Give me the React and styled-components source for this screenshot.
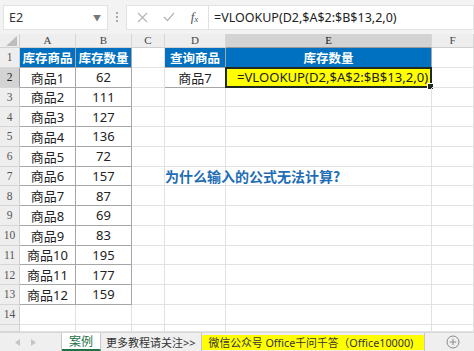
import React from 'react';
import styled, { createGlobalStyle } from 'styled-components';

const GlobalStyle = createGlobalStyle`
  html, body {
    margin: 0;
    padding: 0;
    background: #fff;
  }
  #root {
    width: 474px;
    height: 351px;
  }
`;

const SANS = `"Noto Sans", "Noto Sans CJK SC", sans-serif`;
const SERIF = `"Liberation Serif", "DejaVu Serif", serif`;

const Window = styled.div`
  width: 474px;
  height: 351px;
  display: flex;
  flex-direction: column;
  overflow: hidden;
  font-family: ${SANS};
`;

const FormulaBar = styled.div`
  height: 34px;
  flex: none;
  display: flex;
  align-items: center;
  padding: 0 0 0 3px;
  background: #f3f3f3;
  box-sizing: border-box;
`;

const NameBox = styled.div`
  width: 105px;
  height: 25px;
  background: #fff;
  border: 1px solid #e2e2e2;
  box-sizing: border-box;
  display: flex;
  align-items: center;
  justify-content: space-between;
  padding: 0 6px 0 5px;
  font-size: 12.5px;
  color: #333;
`;

const Caret = styled.span`
  font-size: 8px;
  color: #777;
`;

const Dots = styled.div`
  width: 18px;
  display: flex;
  flex-direction: column;
  align-items: center;
  gap: 2px;
  span {
    width: 2px;
    height: 2px;
    background: #a8a8a8;
  }
`;

const ButtonsBox = styled.div`
  width: 82px;
  height: 25px;
  background: #fff;
  border: 1px solid #e2e2e2;
  border-right: none;
  box-sizing: border-box;
  display: flex;
  align-items: center;
  justify-content: space-around;
  padding: 0 2px;
`;

const Fx = styled.span`
  font-family: ${SERIF};
  font-style: italic;
  font-size: 13px;
  color: #555;
  sub {
    font-size: 9px;
    vertical-align: -1px;
  }
`;

const FormulaInput = styled.div`
  flex: 1;
  height: 25px;
  background: #fff;
  border: 1px solid #e2e2e2;
  box-sizing: border-box;
  display: flex;
  align-items: center;
  padding-left: 5px;
  font-size: 12.5px;
  color: #222;
  white-space: nowrap;
`;

const Sheet = styled.div`
  flex: 1;
  display: grid;
  grid-template-columns: 20px 56px 56px 33px 61px 206px 1fr;
  grid-template-rows: 14px repeat(14, 19.75px) 1fr;
  overflow: hidden;
  background: #fff;
`;

const Corner = styled.div`
  background: #eeeeee;
  border-right: 1px solid #d0d0d0;
  border-bottom: 1px solid #d0d0d0;
  box-sizing: border-box;
  display: flex;
  align-items: flex-end;
  justify-content: flex-end;
  padding: 0 2px 1px 0;
`;

const ColHead = styled.div`
  background: ${p => (p.$active ? '#d3d3d3' : '#eeeeee')};
  border-right: 1px solid #d6d6d6;
  border-bottom: 1px solid ${p => (p.$active ? '#9a9a9a' : '#d0d0d0')};
  box-sizing: border-box;
  display: flex;
  align-items: center;
  justify-content: center;
  font-family: ${SERIF};
  font-size: 11px;
  color: ${p => (p.$active ? '#222' : '#444')};
  line-height: 1;
`;

const RowHead = styled.div`
  background: ${p => (p.$active ? '#d3d3d3' : '#eeeeee')};
  border-right: 1px solid ${p => (p.$active ? '#9a9a9a' : '#d0d0d0')};
  border-bottom: 1px solid #d6d6d6;
  box-sizing: border-box;
  display: flex;
  align-items: center;
  justify-content: center;
  font-family: ${SERIF};
  font-size: 11.5px;
  color: ${p => (p.$active ? '#222' : '#555')};
  overflow: hidden;
`;

const Cell = styled.div`
  position: relative;
  box-sizing: border-box;
  border-right: 1px solid ${p => (p.$edge ? '#a6a6a6' : '#e2e2e2')};
  border-bottom: 1px solid ${p => (p.$edge ? '#a6a6a6' : '#e2e2e2')};
  background: ${p => p.$fill || 'transparent'};
  color: ${p => (p.$fill === '#0070c0' ? '#fff' : '#222')};
  font-size: 13px;
  display: flex;
  align-items: center;
  justify-content: ${p => p.$align || 'center'};
  padding: ${p => (p.$align === 'flex-start' ? '0 0 0 11px' : '0')};
  white-space: nowrap;
  overflow: visible;
  min-width: 0;
`;

const HeaderText = styled.span`
  font-family: "Noto Sans CJK SC", sans-serif;
  font-size: 12.5px;
  font-weight: 700;
`;

const FormulaText = styled.span`
  font-size: 13.1px;
`;

const Selected = styled.div`
  position: absolute;
  inset: -1px;
  border: 2px solid #1e2a22;
  pointer-events: none;
  &::after {
    content: '';
    position: absolute;
    right: -4px;
    bottom: -4px;
    width: 5px;
    height: 5px;
    background: #1e2a22;
    border: 1px solid #fff;
  }
`;

const Question = styled.span`
  font-family: "Noto Sans CJK SC", sans-serif;
  font-size: 14px;
  font-weight: 700;
  color: #1f6db4;
  position: relative;
  left: -11px;
`;

const TabBar = styled.div`
  height: 19px;
  flex: none;
  display: flex;
  align-items: stretch;
  background: #efefef;
  border-top: 1px solid #d8d8d8;
  box-sizing: border-box;
  font-size: 11px;
  color: #333;
`;

const NavArrows = styled.div`
  width: 62px;
  display: flex;
  align-items: center;
  gap: 11px;
  padding-left: 15px;
  box-sizing: border-box;
  border-right: 1px solid #c6c6c6;
`;

const Tab = styled.div`
  display: flex;
  align-items: center;
  padding: 0 ${p => p.$pad}px;
  background: ${p => (p.$active ? '#fff' : 'transparent')};
  color: ${p => (p.$active ? '#217346' : '#333')};
  border-bottom: ${p => (p.$active ? '2px solid #217346' : 'none')};
  border-right: 1px solid #c6c6c6;
  box-sizing: border-box;
  white-space: nowrap;
  font-size: ${p => (p.$active ? '12px' : 'inherit')};
`;

const Highlight = styled.span`
  background: #ffff00;
  padding: 0 11px 0 7px;
  height: 15px;
  line-height: 15px;
  font-size: 10.8px;
`;

const AddSheet = styled.div`
  flex: 1;
  display: flex;
  align-items: center;
  padding-left: 21px;
`;

const products = [62, 111, 127, 136, 72, 157, 87, 69, 83, 195, 177, 159];
const cols = ['A', 'B', 'C', 'D', 'E', 'F'];

const Triangle = ({ dir }) => (
  <svg width="5" height="7" viewBox="0 0 5 7">
    <polygon points={dir === 'left' ? '5,0 0,3.5 5,7' : '0,0 5,3.5 0,7'} fill="#c4c4c4" />
  </svg>
);

function cellFor(r, c) {
  const inLeft = r >= 1 && r <= 13 && c <= 1;
  const inRight = r >= 1 && r <= 2 && (c === 3 || c === 4);
  const edge = inLeft || inRight;
  const key = `${r}-${c}`;

  if (r === 1 && c === 0) return <Cell key={key} $edge $fill="#0070c0"><HeaderText>库存商品</HeaderText></Cell>;
  if (r === 1 && c === 1) return <Cell key={key} $edge $fill="#0070c0"><HeaderText>库存数量</HeaderText></Cell>;
  if (r === 1 && c === 3) return <Cell key={key} $edge $fill="#0070c0"><HeaderText>查询商品</HeaderText></Cell>;
  if (r === 1 && c === 4) return <Cell key={key} $edge $fill="#0070c0"><HeaderText>库存数量</HeaderText></Cell>;
  if (r >= 2 && r <= 13 && c === 0) return <Cell key={key} $edge>{`商品${r - 1}`}</Cell>;
  if (r >= 2 && r <= 13 && c === 1) return <Cell key={key} $edge>{products[r - 2]}</Cell>;
  if (r === 2 && c === 3) return <Cell key={key} $edge>商品7</Cell>;
  if (r === 2 && c === 4)
    return (
      <Cell key={key} $edge $fill="#ffff00" $align="flex-start">
        <FormulaText>=VLOOKUP(D2,$A$2:$B$13,2,0)</FormulaText>
        <Selected />
      </Cell>
    );
  if (r === 7 && c === 3)
    return (
      <Cell key={key} $align="flex-start">
        <Question>为什么输入的公式无法计算?</Question>
      </Cell>
    );
  return <Cell key={key} $edge={edge} />;
}

export default function App() {
  const rows = Array.from({ length: 15 }, (_, i) => i + 1);
  return (
    <Window>
      <GlobalStyle />
      <FormulaBar>
        <NameBox>
          E2
          <Caret>▼</Caret>
        </NameBox>
        <Dots>
          <span />
          <span />
          <span />
        </Dots>
        <ButtonsBox>
          <svg width="11" height="11" viewBox="0 0 11 11">
            <path d="M1 1 L10 10 M10 1 L1 10" stroke="#b5b5b5" strokeWidth="1.2" />
          </svg>
          <svg width="12" height="10" viewBox="0 0 12 10">
            <path d="M1 5 L4.5 8.5 L11 1" stroke="#b5b5b5" strokeWidth="1.2" fill="none" />
          </svg>
          <Fx>
            f<sub>x</sub>
          </Fx>
        </ButtonsBox>
        <FormulaInput>=VLOOKUP(D2,$A$2:$B$13,2,0)</FormulaInput>
      </FormulaBar>

      <Sheet>
        <Corner>
          <svg width="11" height="10" viewBox="0 0 11 10">
            <polygon points="11,0 11,10 0,10" fill="#bdbdbd" />
          </svg>
        </Corner>
        {cols.map(c => (
          <ColHead key={c} $active={c === 'E'}>
            {c}
          </ColHead>
        ))}
        {rows.map(r => (
          <React.Fragment key={r}>
            <RowHead $active={r === 2}>{r <= 14 ? r : ''}</RowHead>
            {cols.map((_, c) => cellFor(r, c))}
          </React.Fragment>
        ))}
      </Sheet>

      <TabBar>
        <NavArrows>
          <Triangle dir="left" />
          <Triangle dir="right" />
        </NavArrows>
        <Tab $active $pad={7}>案例</Tab>
        <Tab $pad={5}>更多教程请关注&gt;&gt;</Tab>
        <Tab $pad={0}>
          <Highlight>微信公众号 Office千问千答（Office10000)</Highlight>
        </Tab>
        <AddSheet>
          <svg width="14" height="14" viewBox="0 0 14 14">
            <circle cx="7" cy="7" r="6" stroke="#8a8a8a" fill="none" strokeWidth="1" />
            <path d="M7 3.8 V10.2 M3.8 7 H10.2" stroke="#8a8a8a" strokeWidth="1" />
          </svg>
        </AddSheet>
      </TabBar>
    </Window>
  );
}
